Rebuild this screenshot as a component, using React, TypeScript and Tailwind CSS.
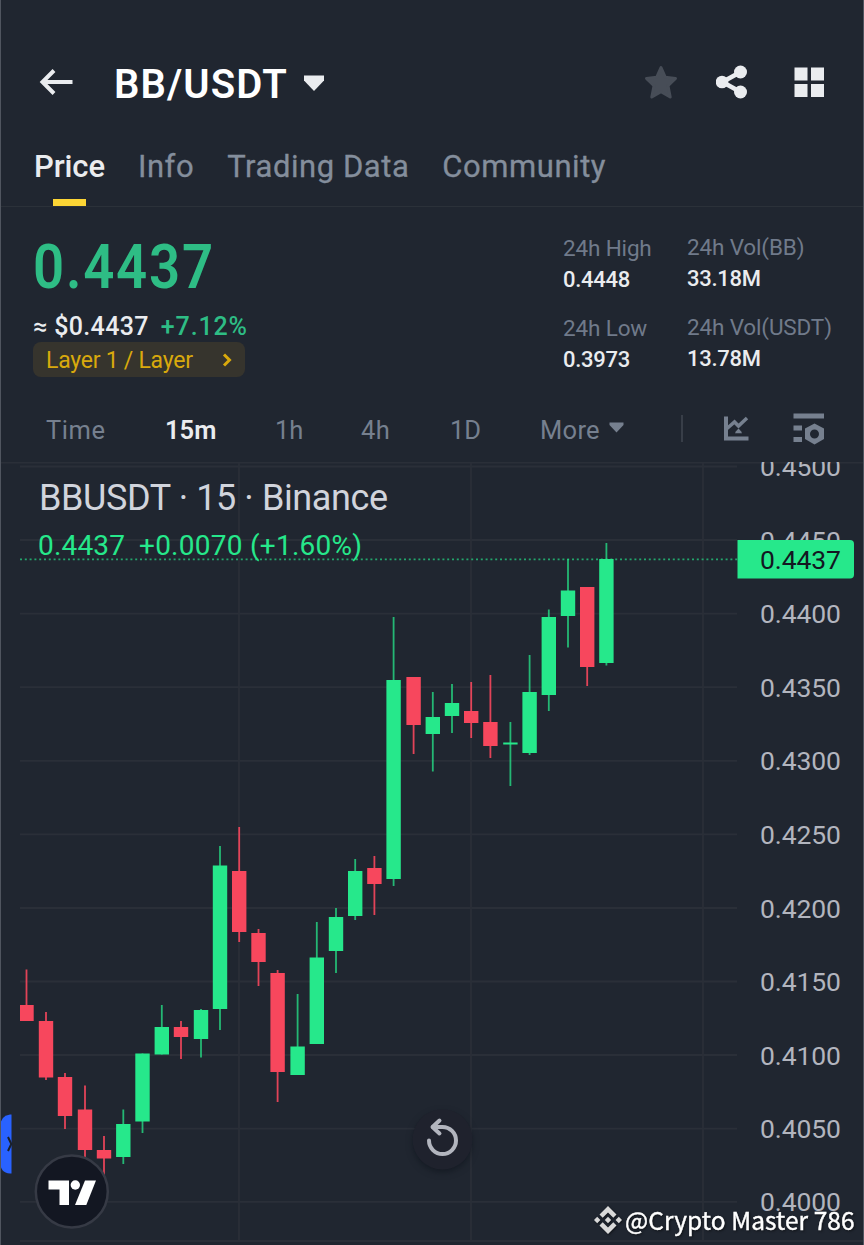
import React from 'react';

const TABS = ["Price", "Info", "Trading Data", "Community"];

// [center x, body top, body bottom, wick top, wick bottom, rising]
const CANDLES: [number, number, number, number, number, boolean][] = [
  [26.5, 1005, 1021, 969.5, 1021, false],
  [46, 1021, 1077.5, 1012, 1080, false],
  [65, 1077, 1116, 1073, 1129, false],
  [85, 1109.5, 1150, 1085.5, 1158, false],
  [104, 1150, 1158.5, 1136, 1178, false],
  [123.3, 1124, 1157, 1109.5, 1164, true],
  [142.5, 1053.5, 1121.5, 1053.5, 1133, true],
  [161.8, 1027, 1054.5, 1005, 1054.5, true],
  [181, 1027, 1037, 1021, 1059, false],
  [201, 1010, 1039, 1009, 1057.5, true],
  [220, 865.5, 1009, 846, 1030, true],
  [239.2, 871, 932, 827, 942, false],
  [258.5, 933, 962, 929, 986, false],
  [277.6, 973, 1072, 970, 1102, false],
  [297.6, 1046.5, 1075, 994, 1075, true],
  [316.8, 957.5, 1044, 922, 1044, true],
  [336, 917, 951, 908, 973, true],
  [355.2, 871, 916, 859, 920, true],
  [374.4, 868, 884, 856, 915, false],
  [393.6, 680, 879, 617, 886, true],
  [413.6, 677, 725, 677, 754, false],
  [432.8, 717, 734, 692, 771.5, true],
  [452, 703, 716, 684, 733, true],
  [471.2, 711, 723, 682, 738, false],
  [490.4, 722, 746, 675, 758, false],
  [510.4, 742.5, 744.5, 722, 786, true],
  [529.6, 692, 753, 655, 755, true],
  [548.8, 617, 695, 609.5, 711, true],
  [568, 590.5, 616, 559, 647.5, true],
  [587.2, 587, 667, 587, 686, false],
  [606.4, 559, 663, 543, 665.5, true],
];

const LEVELS = [
  { label: "0.4500", y: 466.5 },
  { label: "0.4450", y: 540 },
  { label: "0.4400", y: 613.7 },
  { label: "0.4350", y: 687.2 },
  { label: "0.4300", y: 760.8 },
  { label: "0.4250", y: 834.3 },
  { label: "0.4200", y: 908 },
  { label: "0.4150", y: 981.5 },
  { label: "0.4100", y: 1055 },
  { label: "0.4050", y: 1128.6 },
  { label: "0.4000", y: 1201.8 },
];

function Header() {
  return (
    <header className="flex items-center h-[66px] mt-[50px] pl-[38px] pr-[39px]">
      <svg className="mb-[2px]" width="35" height="28" viewBox="0 0 35 28" fill="none" stroke="#eaecef" strokeWidth="4">
        <path d="M4 14H34.500M16 2.500L4.500 14L16 25.500" />
      </svg>
      <h1 className="ml-[41px] mt-[3px] text-[40px] leading-none font-semibold tracking-[1.100px] text-white">BB/USDT</h1>
      <svg className="ml-[15px]" width="22" height="17" viewBox="0 0 22 17" fill="#eaecef">
        <path d="M1 0.500H21V5.500L11 16L1 5.500Z" />
      </svg>
      <svg className="ml-auto mb-[2px]" width="34" height="35" viewBox="0 0 34 35" fill="#474d57" stroke="#474d57" strokeWidth="3" strokeLinejoin="round">
        <path d="M17 2.500L21.300 12.300L31.500 13.400L24 20.800L26.200 32L17 26.800L7.800 32L10 20.800L2.500 13.400L12.700 12.300Z" />
      </svg>
      <svg className="ml-[38px] mb-[2px]" width="33" height="34" viewBox="0 0 33 34" fill="#eaecef">
        <path d="M6.500 17L24.500 7M6.500 17L24.500 27" stroke="#eaecef" strokeWidth="4.500" />
        <circle cx="6" cy="17" r="6.300" />
        <circle cx="24.500" cy="7" r="6.500" />
        <circle cx="24.500" cy="27" r="6.500" />
      </svg>
      <svg className="ml-[45px] mb-[1px]" width="31" height="31" viewBox="0 0 31 31" fill="#eaecef">
        <path d="M0.500 0.500H13.500V13.500H0.500ZM17 0.500H30V13.500H17ZM0.500 17H13.500V30H0.500ZM17 17H30V30H17Z" />
      </svg>
    </header>
  );
}

function Tabs() {
  return (
    <nav className="flex h-[91px] pl-[34px] gap-[33px] border-b border-[#2b3139] text-[31px] leading-none">
      {TABS.map((tab, i) => (
        <div key={tab} className="relative pt-[35px] h-full whitespace-nowrap">
          <span className={i === 0 ? "font-medium text-[#eaecef] tracking-[-0.100px]" : "text-[#848e9c] tracking-[0.550px] [-webkit-text-stroke:0.300px_#848e9c]"}>{tab}</span>
          {i === 0 && <div className="absolute left-[19px] bottom-0 w-[33px] h-[7px] bg-[#fcd535]" />}
        </div>
      ))}
    </nav>
  );
}

function Stat({ label, value }: { label: string; value: string }) {
  return (
    <div className="h-[80px] pl-[1px] whitespace-nowrap leading-none">
      <div className="text-[22.500px] text-[#707a8a] tracking-[-0.150px]">{label}</div>
      <div className="mt-[9px] text-[22px] font-medium text-[#eaecef] tracking-[-0.300px]">{value}</div>
    </div>
  );
}

function Summary() {
  return (
    <section className="flex h-[188px] leading-none">
      <div className="w-[562px] pl-[33px] pt-[29px]">
        <div className="w-fit text-[62px] font-semibold text-[#2ebd85] tracking-[2px] origin-left scale-x-[0.880]">0.4437</div>
        <div className="flex mt-[16px] text-[25px]">
          <span className="font-medium text-[#eaecef] tracking-[0.350px]">≈ $0.4437</span>
          <span className="ml-[12px] font-medium text-[#2ebd85] tracking-[0.850px]">+7.12%</span>
        </div>
        <div className="flex items-center justify-between w-[212px] h-[35px] mt-[3px] pl-[13px] pr-[12px] rounded-[8px] bg-[#36342d] text-[23px] text-[#d9a90c]">
          <span className="pt-[1px] tracking-[-0.250px]">Layer 1 / Layer</span>
          <svg width="12" height="14" viewBox="0 0 12 14" fill="none" stroke="#d9a90c" strokeWidth="3">
            <path d="M3 1.500L8.500 7L3 12.500" />
          </svg>
        </div>
      </div>
      <div className="w-[124px] pt-[30px]">
        <Stat label="24h High" value="0.4448" />
        <Stat label="24h Low" value="0.3973" />
      </div>
      <div className="pt-[29px]">
        <Stat label="24h Vol(BB)" value="33.18M" />
        <Stat label="24h Vol(USDT)" value="13.78M" />
      </div>
    </section>
  );
}

function Intervals() {
  return (
    <div className="flex items-center h-[67px] pl-[46px] text-[25.500px] leading-none text-[#76808f]">
      <span className="mt-[4px] w-[119px] tracking-[0.600px]">Time</span>
      <span className="mt-[4px] w-[110px] font-semibold text-[#eaecef]">15m</span>
      <span className="mt-[4px] w-[86px]">1h</span>
      <span className="mt-[4px] w-[89px] tracking-[0.500px]">4h</span>
      <span className="mt-[4px] w-[90px]">1D</span>
      <span className="mt-[4px] w-[69px] tracking-[0.300px]">More</span>
      <svg className="mb-[3px]" width="15" height="11" viewBox="0 0 15 11" fill="#76808f">
        <path d="M0.500 0.500H14.500V3L7.500 10.500L0.500 3Z" />
      </svg>
      <div className="ml-[57px] w-[2px] h-[27px] bg-[#383e48]" />
      <svg className="ml-[41px]" width="25" height="26" viewBox="0 0 25 26" fill="none" stroke="#76808f">
        <path d="M2 0.500V22.500H24.500" strokeWidth="4" />
        <path d="M3 12.500L10.500 6L14.500 10L23 2" strokeWidth="3.500" />
        <path d="M14.500 12.500L17 15.300L18 17.300H11L12 15.300Z" fill="#76808f" stroke="none" />
      </svg>
      <svg className="ml-[44px]" width="32" height="32" viewBox="0 0 32 32" fill="#76808f">
        <path d="M0.500 0.500H31V5.500H0.500ZM0.500 12.500H9V17.500H0.500ZM0.500 24H9V29H0.500Z" />
        <path fillRule="evenodd" d="M21.500 10.500L31 15.500V26L21.500 31.500L12 26V15.500ZM21.500 16.500A4.500 4.500 0 1 0 21.500 25.500A4.500 4.500 0 1 0 21.500 16.500Z" />
      </svg>
    </div>
  );
}

function Chart() {
  return (
    <svg className="block" width="864" height="783" viewBox="0 462 864 783" fontFamily="Roboto, sans-serif">
      {/* Grid */}
      <g stroke="#2a2f38" strokeWidth="1.800">
        {LEVELS.map((l) => <path key={l.label} d={`M20 ${l.y}H737`} />)}
        <path d="M239 462V1240M471 462V1240M703 462V1240" />
        <path d="M0 462.500H864M20 1241H864" />
      </g>
      {/* Price axis */}
      <g fill="#b2b5be" fontSize="26.500">
        {LEVELS.map((l) => <text key={l.label} x="760" y={l.y + 9.5} textLength="81">{l.label}</text>)}
      </g>
      <path d="M20 559.300H738" stroke="#23a56c" strokeWidth="1.800" strokeDasharray="2 2.800" />
      {CANDLES.map(([x, top, bottom, high, low, up]) => {
        const left = Math.max(20, x - 7.2);
        return (
          <g key={x} fill={up ? "#26e88b" : "#f7475d"}>
            <rect x={x - 0.9} y={high} width="1.800" height={low - high} opacity={up ? 0.75 : 0.9} />
            <rect x={left} y={top} width={x + 7.2 - left} height={bottom - top} />
          </g>
        );
      })}
      {/* Legend */}
      <text x="39" y="510" fontSize="36" fill="#d1d4dc" textLength="349">BBUSDT · 15 · Binance</text>
      <g fontSize="28" fill="#26e88b">
        <text x="38" y="555" textLength="87">0.4437</text>
        <text x="139" y="555" textLength="223">+0.0070 (+1.60%)</text>
      </g>
      {/* Last price */}
      <path d="M737.500 540H850Q854 540 854 544V574.500Q854 578.500 850 578.500H737.500Z" fill="#26e88b" />
      <text x="760" y="568.500" fontSize="26.500" fill="#131722" textLength="81">0.4437</text>
      {/* Drawer handle */}
      <path d="M11.500 1114.500H10Q0 1116 0 1127V1161Q0 1173 10 1173.500H11.500Z" fill="#2962ff" />
      <path d="M8 1137L11.300 1144L8 1151" fill="none" stroke="#1a202b" strokeWidth="2" />
      {/* TradingView badge */}
      <circle cx="71.800" cy="1191.500" r="36" fill="#131722" stroke="#363a45" strokeWidth="2.500" />
      <g fill="#fff">
        <path d="M48.500 1180.500H69V1205H59.500V1189.500H48.500Z" />
        <circle cx="75.300" cy="1185" r="4.700" />
        <path d="M85 1180.500H96L86.300 1205H75Z" />
      </g>
      {/* Reset button */}
      <circle cx="442.500" cy="1139.500" r="30" fill="#1f222d" className="drop-shadow-[0_3px_3px_rgba(10,16,24,0.5)]" />
      <g fill="none" stroke="#b2b5be" strokeWidth="4" strokeLinecap="round" strokeLinejoin="round">
        <path d="M429 1140.500A13.500 13.500 0 1 0 442.500 1127H433" />
        <path d="M439.500 1120.500L432.500 1127L439.500 1133.500" />
      </g>
    </svg>
  );
}

function Watermark() {
  return (
    <div className="absolute right-[8px] bottom-[9px] flex items-center h-[32px] text-white drop-shadow-[1px_1px_1px_rgba(0,0,0,0.5)]">
      <svg width="28" height="28" viewBox="0 0 28 28" fill="#d9d9d9">
        <path d="M14 0L22.500 8.500L19.300 11.700L14 6.400L8.700 11.700L5.500 8.500ZM14 28L5.500 19.500L8.700 16.300L14 21.600L19.300 16.300L22.500 19.500ZM3.200 10.800L6.400 14L3.200 17.200L0 14ZM24.800 10.800L28 14L24.800 17.200L21.600 14ZM14 10.800L17.200 14L14 17.200L10.800 14Z" />
      </svg>
      <span className="ml-[3px] w-[231px] whitespace-nowrap font-['Noto_Sans_CJK_SC',sans-serif] text-[24.500px] leading-none tracking-[0.060px] [-webkit-text-stroke:0.400px_white]">@Crypto Master 786</span>
    </div>
  );
}

export default function App() {
  return (
    <main className="relative w-[864px] h-[1245px] overflow-hidden bg-[#202630] font-[Roboto,sans-serif]">
      <Header />
      <Tabs />
      <Summary />
      <Intervals />
      <Chart />
      <Watermark />
      {/* Frame edges */}
      <div className="absolute inset-0 border-x border-[#50555f] pointer-events-none" />
    </main>
  );
}
